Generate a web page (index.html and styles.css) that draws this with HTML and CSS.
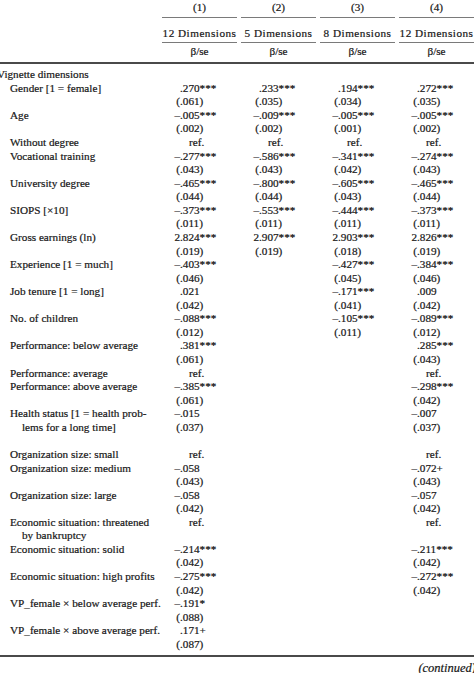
FILE: index.html
```html
<!DOCTYPE html>
<html lang="en">
<head>
<meta charset="utf-8">
<title>Vignette regression table</title>
<link rel="stylesheet" href="styles.css">
</head>
<body>
<div class="sheet">
  <div class="head">
    <div class="row h1">
      <div></div>
      <div class="hc"><span>(1)</span></div>
      <div class="hc"><span>(2)</span></div>
      <div class="hc"><span>(3)</span></div>
      <div class="hc"><span>(4)</span></div>
    </div>
    <div class="row h2">
      <div></div>
      <div class="hc"><span>12 Dimensions</span></div>
      <div class="hc"><span>5 Dimensions</span></div>
      <div class="hc"><span>8 Dimensions</span></div>
      <div class="hc"><span>12 Dimensions</span></div>
    </div>
    <div class="row h3">
      <div></div>
      <div class="hc">β/se</div>
      <div class="hc">β/se</div>
      <div class="hc">β/se</div>
      <div class="hc">β/se</div>
    </div>
  </div>

  <div class="body">
    <div class="section">Vignette dimensions</div>

    <div class="row">
      <div class="lab">Gender [1 = female]</div>
      <div class="v"><p><span class="n"></span>.270***</p><p><span class="n">(</span>.061)</p></div>
      <div class="v"><p><span class="n"></span>.233***</p><p><span class="n">(</span>.035)</p></div>
      <div class="v"><p><span class="n"></span>.194***</p><p><span class="n">(</span>.034)</p></div>
      <div class="v"><p><span class="n"></span>.272***</p><p><span class="n">(</span>.035)</p></div>
    </div>

    <div class="row">
      <div class="lab">Age</div>
      <div class="v"><p><span class="n">–</span>.005***</p><p><span class="n">(</span>.002)</p></div>
      <div class="v"><p><span class="n">–</span>.009***</p><p><span class="n">(</span>.002)</p></div>
      <div class="v"><p><span class="n">–</span>.005***</p><p><span class="n">(</span>.001)</p></div>
      <div class="v"><p><span class="n">–</span>.005***</p><p><span class="n">(</span>.002)</p></div>
    </div>

    <div class="row">
      <div class="lab">Without degree</div>
      <div class="v"><p class="ref">ref.</p></div>
      <div class="v"><p class="ref">ref.</p></div>
      <div class="v"><p class="ref">ref.</p></div>
      <div class="v"><p class="ref">ref.</p></div>
    </div>

    <div class="row">
      <div class="lab">Vocational training</div>
      <div class="v"><p><span class="n">–</span>.277***</p><p><span class="n">(</span>.043)</p></div>
      <div class="v"><p><span class="n">–</span>.586***</p><p><span class="n">(</span>.043)</p></div>
      <div class="v"><p><span class="n">–</span>.341***</p><p><span class="n">(</span>.042)</p></div>
      <div class="v"><p><span class="n">–</span>.274***</p><p><span class="n">(</span>.043)</p></div>
    </div>

    <div class="row">
      <div class="lab">University degree</div>
      <div class="v"><p><span class="n">–</span>.465***</p><p><span class="n">(</span>.044)</p></div>
      <div class="v"><p><span class="n">–</span>.800***</p><p><span class="n">(</span>.044)</p></div>
      <div class="v"><p><span class="n">–</span>.605***</p><p><span class="n">(</span>.043)</p></div>
      <div class="v"><p><span class="n">–</span>.465***</p><p><span class="n">(</span>.044)</p></div>
    </div>

    <div class="row">
      <div class="lab">SIOPS [×10]</div>
      <div class="v"><p><span class="n">–</span>.373***</p><p><span class="n">(</span>.011)</p></div>
      <div class="v"><p><span class="n">–</span>.553***</p><p><span class="n">(</span>.011)</p></div>
      <div class="v"><p><span class="n">–</span>.444***</p><p><span class="n">(</span>.011)</p></div>
      <div class="v"><p><span class="n">–</span>.373***</p><p><span class="n">(</span>.011)</p></div>
    </div>

    <div class="row">
      <div class="lab">Gross earnings (ln)</div>
      <div class="v"><p><span class="n">2</span>.824***</p><p><span class="n">(</span>.019)</p></div>
      <div class="v"><p><span class="n">2</span>.907***</p><p><span class="n">(</span>.019)</p></div>
      <div class="v"><p><span class="n">2</span>.903***</p><p><span class="n">(</span>.018)</p></div>
      <div class="v"><p><span class="n">2</span>.826***</p><p><span class="n">(</span>.019)</p></div>
    </div>

    <div class="row">
      <div class="lab">Experience [1 = much]</div>
      <div class="v"><p><span class="n">–</span>.403***</p><p><span class="n">(</span>.046)</p></div>
      <div class="v"></div>
      <div class="v"><p><span class="n">–</span>.427***</p><p><span class="n">(</span>.045)</p></div>
      <div class="v"><p><span class="n">–</span>.384***</p><p><span class="n">(</span>.046)</p></div>
    </div>

    <div class="row">
      <div class="lab">Job tenure [1 = long]</div>
      <div class="v"><p><span class="n"></span>.021</p><p><span class="n">(</span>.042)</p></div>
      <div class="v"></div>
      <div class="v"><p><span class="n">–</span>.171***</p><p><span class="n">(</span>.041)</p></div>
      <div class="v"><p><span class="n"></span>.009</p><p><span class="n">(</span>.042)</p></div>
    </div>

    <div class="row">
      <div class="lab">No. of children</div>
      <div class="v"><p><span class="n">–</span>.088***</p><p><span class="n">(</span>.012)</p></div>
      <div class="v"></div>
      <div class="v"><p><span class="n">–</span>.105***</p><p><span class="n">(</span>.011)</p></div>
      <div class="v"><p><span class="n">–</span>.089***</p><p><span class="n">(</span>.012)</p></div>
    </div>

    <div class="row">
      <div class="lab">Performance: below average</div>
      <div class="v"><p><span class="n"></span>.381***</p><p><span class="n">(</span>.061)</p></div>
      <div class="v"></div>
      <div class="v"></div>
      <div class="v"><p><span class="n"></span>.285***</p><p><span class="n">(</span>.043)</p></div>
    </div>

    <div class="row">
      <div class="lab">Performance: average</div>
      <div class="v"><p class="ref">ref.</p></div>
      <div class="v"></div>
      <div class="v"></div>
      <div class="v"><p class="ref">ref.</p></div>
    </div>

    <div class="row">
      <div class="lab">Performance: above average</div>
      <div class="v"><p><span class="n">–</span>.385***</p><p><span class="n">(</span>.061)</p></div>
      <div class="v"></div>
      <div class="v"></div>
      <div class="v"><p><span class="n">–</span>.298***</p><p><span class="n">(</span>.042)</p></div>
    </div>

    <div class="row">
      <div class="lab wrap">Health status [1 = health prob-<br>lems for a long time]</div>
      <div class="v"><p><span class="n">–</span>.015</p><p><span class="n">(</span>.037)</p></div>
      <div class="v"></div>
      <div class="v"></div>
      <div class="v"><p><span class="n">–</span>.007</p><p><span class="n">(</span>.037)</p></div>
    </div>

    <div class="blank"></div>

    <div class="row">
      <div class="lab">Organization size: small</div>
      <div class="v"><p class="ref">ref.</p></div>
      <div class="v"></div>
      <div class="v"></div>
      <div class="v"><p class="ref">ref.</p></div>
    </div>

    <div class="row">
      <div class="lab">Organization size: medium</div>
      <div class="v"><p><span class="n">–</span>.058</p><p><span class="n">(</span>.043)</p></div>
      <div class="v"></div>
      <div class="v"></div>
      <div class="v"><p><span class="n">–</span>.072+</p><p><span class="n">(</span>.043)</p></div>
    </div>

    <div class="row">
      <div class="lab">Organization size: large</div>
      <div class="v"><p><span class="n">–</span>.058</p><p><span class="n">(</span>.042)</p></div>
      <div class="v"></div>
      <div class="v"></div>
      <div class="v"><p><span class="n">–</span>.057</p><p><span class="n">(</span>.042)</p></div>
    </div>

    <div class="row">
      <div class="lab wrap">Economic situation: threatened<br>by bankruptcy</div>
      <div class="v"><p class="ref">ref.</p></div>
      <div class="v"></div>
      <div class="v"></div>
      <div class="v"><p class="ref">ref.</p></div>
    </div>

    <div class="row">
      <div class="lab">Economic situation: solid</div>
      <div class="v"><p><span class="n">–</span>.214***</p><p><span class="n">(</span>.042)</p></div>
      <div class="v"></div>
      <div class="v"></div>
      <div class="v"><p><span class="n">–</span>.211***</p><p><span class="n">(</span>.042)</p></div>
    </div>

    <div class="row">
      <div class="lab">Economic situation: high profits</div>
      <div class="v"><p><span class="n">–</span>.275***</p><p><span class="n">(</span>.042)</p></div>
      <div class="v"></div>
      <div class="v"></div>
      <div class="v"><p><span class="n">–</span>.272***</p><p><span class="n">(</span>.042)</p></div>
    </div>

    <div class="row">
      <div class="lab">VP_female × below average perf.</div>
      <div class="v"><p><span class="n">–</span>.191*</p><p><span class="n">(</span>.088)</p></div>
      <div class="v"></div>
      <div class="v"></div>
      <div class="v"></div>
    </div>

    <div class="row">
      <div class="lab">VP_female × above average perf.</div>
      <div class="v"><p><span class="n"></span>.171+</p><p><span class="n">(</span>.087)</p></div>
      <div class="v"></div>
      <div class="v"></div>
      <div class="v"></div>
    </div>
  </div>

  <div class="foot">(continued)</div>
</div>
</body>
</html>
```

FILE: styles.css
```css
html, body {
  margin: 0;
  padding: 0;
  background: #ffffff;
}

body {
  overflow: hidden;
  color: #161616;
  font-family: "Liberation Serif", "Times New Roman", serif;
  font-size: 11.2px;
  line-height: 13.57px;
  -webkit-text-stroke: 0.2px #161616;
}

.sheet {
  width: 479px;
  margin-left: -3px;
}

.row {
  display: grid;
  grid-template-columns: 163px repeat(4, 79px);
}

/* header */
.head {
  padding-top: 1px;
}

.hc {
  padding: 0 2px;
  text-align: center;
  white-space: nowrap;
}

.h1 .hc span,
.h2 .hc span {
  display: block;
  padding-bottom: 2px;
  border-bottom: 1px solid #7a7a7a;
}

.h2 .hc span {
  padding-top: 9px;
  letter-spacing: 0.5px;
}

.h3 {
  padding-top: 2px;
  padding-bottom: 3px;
  border-bottom: 2px solid #4a4a4a;
}

/* body */
.body {
  padding-top: 4.5px;
  padding-bottom: 4px;
  border-bottom: 2px solid #4a4a4a;
}

.section {
  white-space: nowrap;
}

.lab {
  padding-left: 13px;
  white-space: nowrap;
}

.lab.wrap {
  padding-left: 25px;
  text-indent: -12px;
}

.v p {
  margin: 0;
  white-space: nowrap;
}

.n {
  display: inline-block;
  width: 20px;
  text-align: right;
}

.ref {
  padding-left: 29px;
}

.blank {
  height: 13.57px;
}

.foot {
  padding-top: 5px;
  text-align: right;
  font-style: italic;
  font-size: 12.5px;
}
```
